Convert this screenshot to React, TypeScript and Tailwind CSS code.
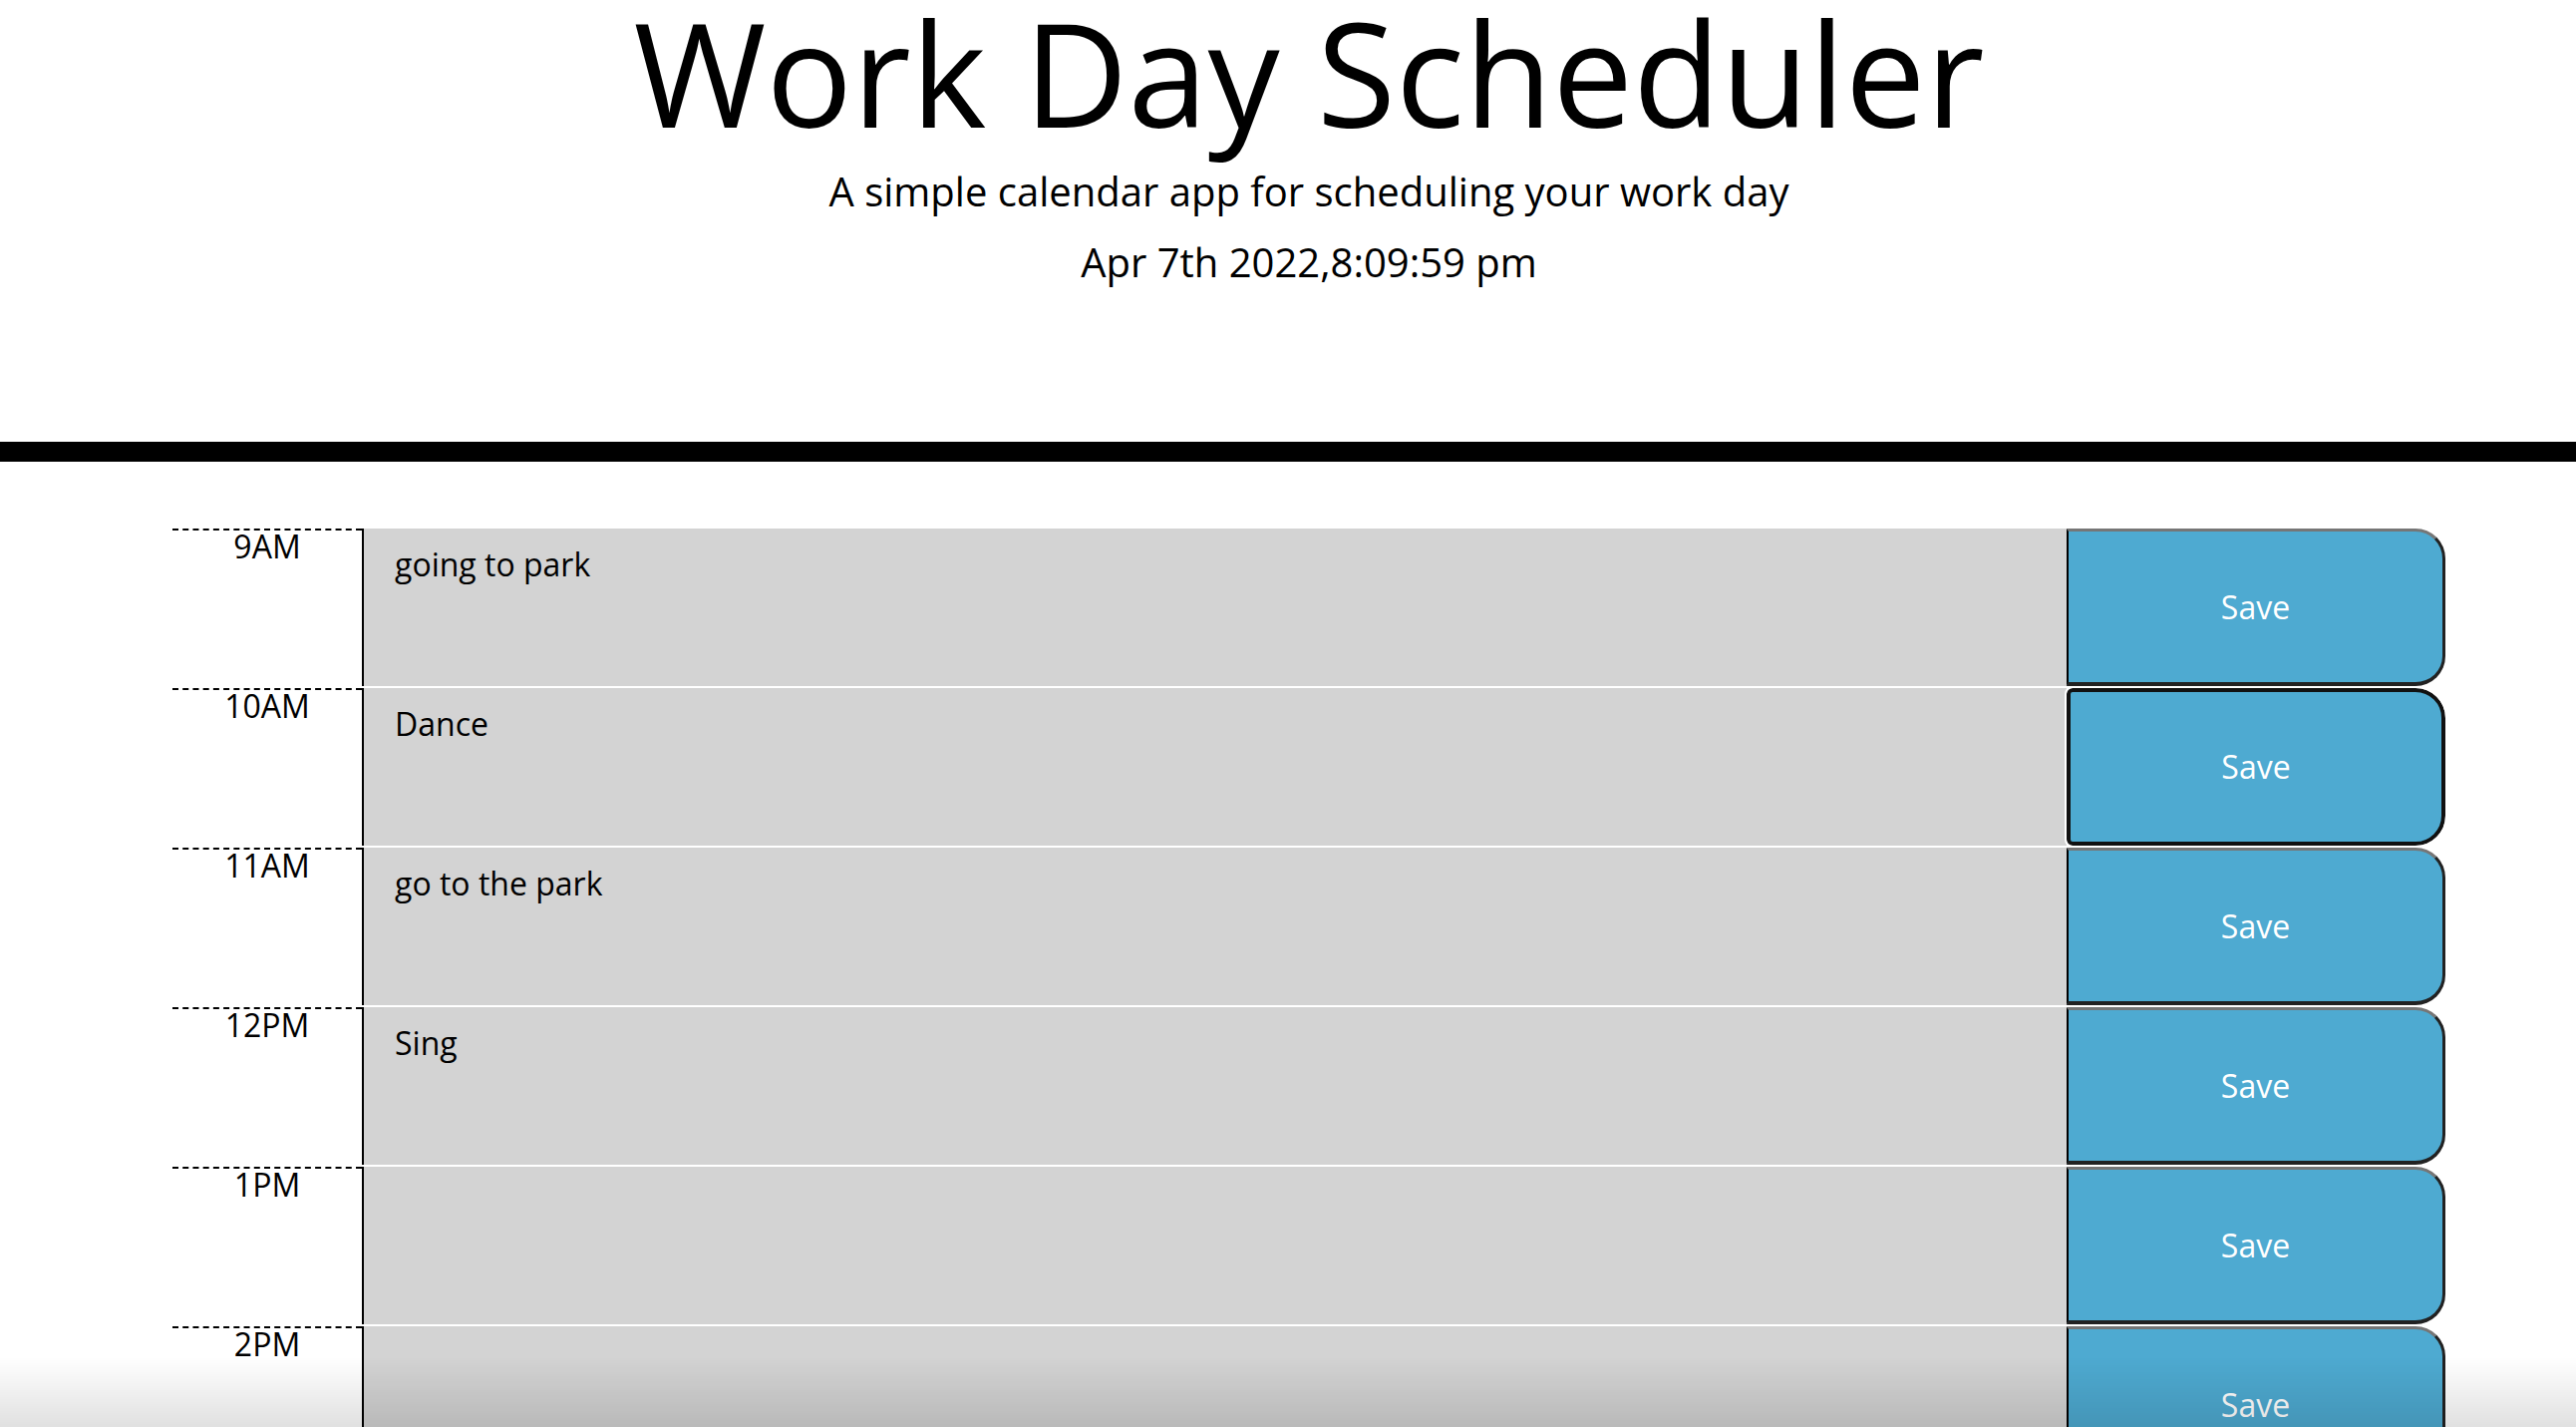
import React from "react";

const rows = [
  { hour: "9AM", text: "going to park" },
  { hour: "10AM", text: "Dance", focused: true },
  { hour: "11AM", text: "go to the park" },
  { hour: "12PM", text: "Sing" },
  { hour: "1PM", text: "" },
  { hour: "2PM", text: "" },
  { hour: "3PM", text: "" },
  { hour: "4PM", text: "" },
  { hour: "5PM", text: "" },
];

export default function App() {
  return (
    <div className="relative min-h-screen bg-white text-black font-['Open_Sans',sans-serif]">
      <header className="text-center border-b-[20px] border-black pb-[160px] pl-[42px]">
        <h1 className="text-[144px] leading-none font-normal">Work Day Scheduler</h1>
        <p className="mt-[28px] text-[40px] leading-none font-normal">
          A simple calendar app for scheduling your work day
        </p>
        <p className="mt-[31px] text-[40px] leading-none font-normal">Apr 7th 2022,8:09:59 pm</p>
      </header>

      <main className="mt-[65px] pl-[173px]">
        {rows.map((r) => (
          <div key={r.hour} className="flex h-[160px] w-[2280px] border-t-2 border-white">
            <div className="w-[190px] shrink-0 border-t-2 border-dashed border-black text-center text-[32px] leading-none">
              {r.hour}
            </div>
            <textarea
              defaultValue={r.text}
              className="w-[1710px] shrink-0 resize-none border-l-[2.5px] border-black bg-[#d3d3d3] pl-[31px] pt-[20px] text-[32px] leading-none text-black outline-none font-['Open_Sans',sans-serif]"
            />
            {r.focused ? (
              <button className="relative z-10 w-[380px] shrink-0 rounded-l-[6px] rounded-r-[30px] border-[4px] border-[#111] bg-[#4eaad1] text-[32px] leading-none text-white outline-2 outline-white font-['Open_Sans',sans-serif]">
                Save
              </button>
            ) : (
              <button className="w-[380px] shrink-0 rounded-r-[30px] border-t-[3px] border-r-[3px] border-b-[4px] border-l-2 border-t-[#767676] border-r-[#222] border-b-[#222] border-l-black bg-[#4eaad1] text-[32px] leading-none text-white font-['Open_Sans',sans-serif]">
                Save
              </button>
            )}
          </div>
        ))}
      </main>

      <div className="pointer-events-none fixed inset-x-0 bottom-0 h-[70px] bg-linear-to-b from-transparent to-black/[0.12]" />
    </div>
  );
}
